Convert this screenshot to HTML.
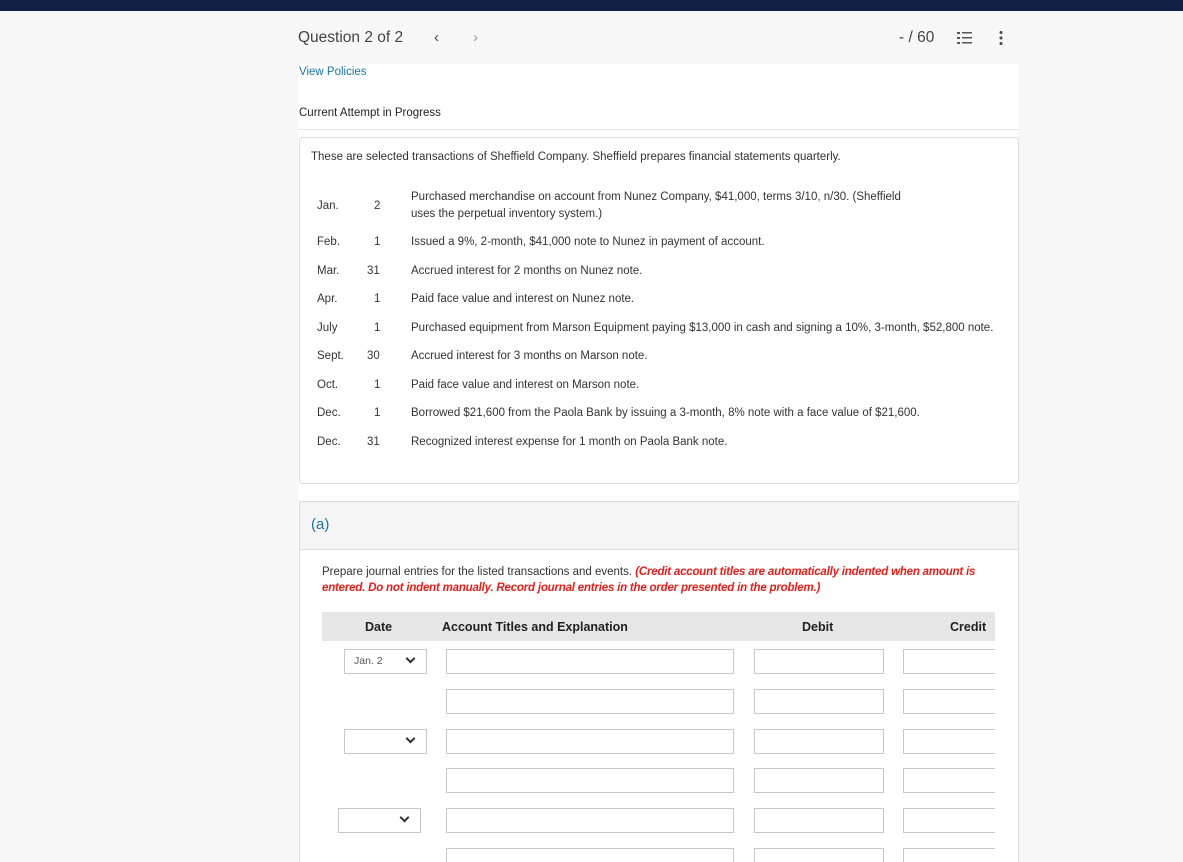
<!DOCTYPE html>
<html><head><meta charset="utf-8"><style>
*{margin:0;padding:0;box-sizing:border-box}
html,body{width:1183px;height:862px;overflow:hidden}
body{background:#f7f7f7;font-family:"Liberation Sans",sans-serif;color:#333;position:relative}
.a{position:absolute;white-space:nowrap}
.s{font-size:11.5px;letter-spacing:0}
.inp{position:absolute;height:25px;border:1px solid #c8c8c8;background:#fff}
.chev{position:absolute;width:7px;height:7px;border-right:2px solid #333;border-bottom:2px solid #333;transform:rotate(45deg)}
</style></head><body>
<div class="a" style="left:0;top:0;width:1183px;height:11px;background:#141f45"></div>
<div class="a" style="left:298px;top:29px;font-size:15.5px;color:#444">Question 2 of 2</div>
<div class="a" style="left:434px;top:29px;font-size:15px;color:#444">&lsaquo;</div>
<div class="a" style="left:473px;top:29px;font-size:15px;color:#999">&rsaquo;</div>
<div class="a" style="left:899px;top:29px;font-size:15.5px;color:#444">- / 60</div>
<svg class="a" style="left:957px;top:31px" width="16" height="14"><g fill="#555"><rect x="0" y="1" width="3" height="2"/><rect x="0" y="6" width="3" height="2"/><rect x="0" y="11" width="3" height="2"/><rect x="5" y="1" width="10" height="1.5"/><rect x="5" y="6" width="10" height="1.5"/><rect x="5" y="11" width="10" height="1.5"/></g></svg>
<svg class="a" style="left:998px;top:30px" width="6" height="16"><g fill="#444"><circle cx="3" cy="2.5" r="1.5"/><circle cx="3" cy="8" r="1.5"/><circle cx="3" cy="13.5" r="1.5"/></g></svg>
<div class="a" style="left:298px;top:64px;width:721px;height:798px;background:#fff"></div>
<div class="a s" style="left:299px;top:66px;color:#1a73a8">View Policies</div>
<div class="a s" style="left:299px;top:107px;color:#222">Current Attempt in Progress</div>
<div class="a" style="left:298px;top:129px;width:721px;height:1px;background:#e6e6e6"></div>
<div class="a" style="left:299px;top:137px;width:720px;height:347px;border:1px solid #ddd;border-radius:3px"></div>
<div class="a s" style="left:311px;top:151px">These are selected transactions of Sheffield Company. Sheffield prepares financial statements quarterly.</div>
<div class="a s" style="left:317px;top:200px">Jan.</div><div class="a s" style="left:374px;top:200px">2</div>
<div class="a s" style="left:411px;top:189px;line-height:17px">Purchased merchandise on account from Nunez Company, $41,000, terms 3/10, n/30. (Sheffield<br>uses the perpetual inventory system.)</div>
<div class="a s" style="left:317px;top:236px">Feb.</div><div class="a s" style="left:374px;top:236px">1</div><div class="a s" style="left:411px;top:236px">Issued a 9%, 2-month, $41,000 note to Nunez in payment of account.</div>
<div class="a s" style="left:317px;top:265px">Mar.</div><div class="a s" style="left:367px;top:265px">31</div><div class="a s" style="left:411px;top:265px">Accrued interest for 2 months on Nunez note.</div>
<div class="a s" style="left:317px;top:293px">Apr.</div><div class="a s" style="left:374px;top:293px">1</div><div class="a s" style="left:411px;top:293px">Paid face value and interest on Nunez note.</div>
<div class="a s" style="left:317px;top:322px">July</div><div class="a s" style="left:374px;top:322px">1</div><div class="a s" style="left:411px;top:322px">Purchased equipment from Marson Equipment paying $13,000 in cash and signing a 10%, 3-month, $52,800 note.</div>
<div class="a s" style="left:317px;top:350px">Sept.</div><div class="a s" style="left:367px;top:350px">30</div><div class="a s" style="left:411px;top:350px">Accrued interest for 3 months on Marson note.</div>
<div class="a s" style="left:317px;top:379px">Oct.</div><div class="a s" style="left:374px;top:379px">1</div><div class="a s" style="left:411px;top:379px">Paid face value and interest on Marson note.</div>
<div class="a s" style="left:317px;top:407px">Dec.</div><div class="a s" style="left:374px;top:407px">1</div><div class="a s" style="left:411px;top:407px">Borrowed $21,600 from the Paola Bank by issuing a 3-month, 8% note with a face value of $21,600.</div>
<div class="a s" style="left:317px;top:436px">Dec.</div><div class="a s" style="left:367px;top:436px">31</div><div class="a s" style="left:411px;top:436px">Recognized interest expense for 1 month on Paola Bank note.</div>
<div class="a" style="left:299px;top:501px;width:720px;height:370px;border:1px solid #ddd"></div>
<div class="a" style="left:300px;top:502px;width:718px;height:48px;background:#f5f5f5;border-bottom:1px solid #ddd"></div>
<div class="a" style="left:311px;top:516px;font-size:15px;color:#1a73a8">(a)</div>
<div class="a s" style="left:322px;top:564px;line-height:16px">Prepare journal entries for the listed transactions and events. <i style="color:#e0201b;font-weight:bold;letter-spacing:-0.2px">(Credit account titles are automatically indented when amount is<br>entered. Do not indent manually. Record journal entries in the order presented in the problem.)</i></div>
<div class="a" style="left:322px;top:612px;width:673px;height:29px;background:#e6e6e6"></div>
<div class="a" style="left:365px;top:620px;font-size:12.5px;font-weight:bold;color:#222">Date</div>
<div class="a" style="left:442px;top:620px;font-size:12.5px;font-weight:bold;color:#222">Account Titles and Explanation</div>
<div class="a" style="left:802px;top:620px;font-size:12.5px;font-weight:bold;color:#222">Debit</div>
<div class="a" style="left:950px;top:620px;font-size:12.5px;font-weight:bold;color:#222">Credit</div>
<div class="inp" style="left:344px;top:649px;width:83px"></div><div class="a" style="left:354px;top:655px;font-size:10.5px;color:#555">Jan. 2</div><div class="chev" style="left:407px;top:655px"></div>
<div class="inp" style="left:344px;top:729px;width:83px"></div><div class="chev" style="left:407px;top:735px"></div>
<div class="inp" style="left:338px;top:808px;width:83px"></div><div class="chev" style="left:401px;top:814px"></div>
<div class="inp" style="left:446px;top:649px;width:288px"></div><div class="inp" style="left:754px;top:649px;width:130px"></div><div class="inp" style="left:903px;top:649px;width:92px;border-right:none"></div>
<div class="inp" style="left:446px;top:689px;width:288px"></div><div class="inp" style="left:754px;top:689px;width:130px"></div><div class="inp" style="left:903px;top:689px;width:92px;border-right:none"></div>
<div class="inp" style="left:446px;top:729px;width:288px"></div><div class="inp" style="left:754px;top:729px;width:130px"></div><div class="inp" style="left:903px;top:729px;width:92px;border-right:none"></div>
<div class="inp" style="left:446px;top:768px;width:288px"></div><div class="inp" style="left:754px;top:768px;width:130px"></div><div class="inp" style="left:903px;top:768px;width:92px;border-right:none"></div>
<div class="inp" style="left:446px;top:808px;width:288px"></div><div class="inp" style="left:754px;top:808px;width:130px"></div><div class="inp" style="left:903px;top:808px;width:92px;border-right:none"></div>
<div class="inp" style="left:446px;top:848px;width:288px"></div><div class="inp" style="left:754px;top:848px;width:130px"></div><div class="inp" style="left:903px;top:848px;width:92px;border-right:none"></div>
</body></html>
